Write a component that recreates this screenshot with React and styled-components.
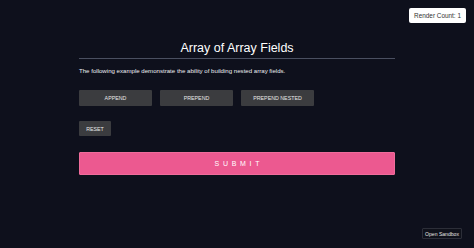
import React from "react";
import styled, { createGlobalStyle } from "styled-components";

const GlobalStyle = createGlobalStyle`
  html, body {
    margin: 0;
    padding: 0;
    background: #0e101c;
    height: 100%;
  }
  body {
    font-family: "Liberation Sans", Arial, sans-serif;
    color: #fff;
  }
`;

const Page = styled.div`
  position: relative;
  min-height: 248px;
`;

const RenderCount = styled.div`
  position: absolute;
  top: 8px;
  right: 8px;
  width: 57px;
  height: 15px;
  box-sizing: border-box;
  background: #fff;
  color: #333;
  border-radius: 2px;
  font-size: 6.4px;
  display: flex;
  align-items: center;
  justify-content: center;
`;

const Form = styled.form`
  width: 316px;
  margin: 0 auto;
  padding-top: 41px;
`;

const Title = styled.h1`
  margin: 0;
  padding-bottom: 3px;
  font-size: 12.5px;
  line-height: 14px;
  font-weight: 400;
  text-align: center;
  border-bottom: 1px solid #4a4f60;
`;

const Intro = styled.p`
  margin: 8px 0 0;
  font-size: 6.1px;
  line-height: 8px;
  color: #eceef2;
`;

const ButtonRow = styled.div`
  display: flex;
  gap: 8px;
  margin-top: ${({ $top }) => $top}px;
`;

const ActionButton = styled.button`
  width: ${({ $w }) => $w}px;
  height: ${({ $h }) => $h || 16}px;
  padding: 0;
  border: none;
  border-radius: 1px;
  background: #3b3c3f;
  color: #e8e8e8;
  font-family: "Liberation Sans", Arial, sans-serif;
  font-size: 5.3px;
  text-transform: uppercase;
`;

const Submit = styled.button`
  display: block;
  width: 100%;
  height: 23px;
  margin-top: 16px;
  padding: 0 0 0 3.7px;
  border: 1px solid #f06c9b;
  border-radius: 1px;
  background: #ec5990;
  color: #fff;
  font-family: "Liberation Sans", Arial, sans-serif;
  font-size: 7px;
  letter-spacing: 3.7px;
  text-transform: uppercase;
`;

const SandboxLink = styled.a`
  position: absolute;
  right: 12px;
  top: 228px;
  width: 40px;
  height: 11px;
  box-sizing: border-box;
  border: 1px solid #2c2e38;
  border-radius: 1px;
  background: #0f111a;
  color: #e6e6e6;
  font-size: 5.1px;
  display: flex;
  align-items: center;
  justify-content: center;
  text-decoration: none;
`;

export default function App() {
  return (
    <Page>
      <GlobalStyle />
      <RenderCount>Render Count: 1</RenderCount>
      <Form onSubmit={(e) => e.preventDefault()}>
        <Title>Array of Array Fields</Title>
        <Intro>
          The following example demonstrate the ability of building nested
          array fields.
        </Intro>
        <ButtonRow $top={15}>
          <ActionButton type="button" $w={73}>append</ActionButton>
          <ActionButton type="button" $w={73}>prepend</ActionButton>
          <ActionButton type="button" $w={73}>prepend nested</ActionButton>
        </ButtonRow>
        <ButtonRow $top={15}>
          <ActionButton type="button" $w={32} $h={15}>reset</ActionButton>
        </ButtonRow>
        <Submit type="submit">Submit</Submit>
      </Form>
      <SandboxLink href="#">Open Sandbox</SandboxLink>
    </Page>
  );
}
